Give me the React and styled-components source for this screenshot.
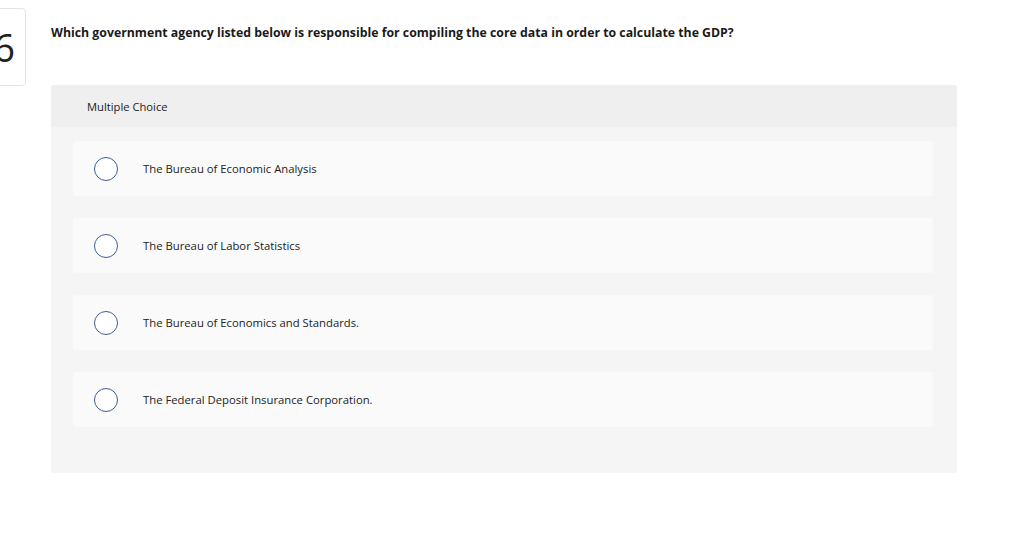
import styled, { createGlobalStyle } from "styled-components";

const GlobalStyle = createGlobalStyle`
  html, body {
    margin: 0;
    padding: 0;
    background: #ffffff;
    overflow: hidden;
  }
  body {
    font-family: "Open Sans", "Lato", Arial, sans-serif;
    color: #1a1a1a;
  }
`;

const Page = styled.div`
  display: flex;
  align-items: flex-start;
  width: 1024px;
  height: 549px;
  padding-top: 8px;
  box-sizing: border-box;
`;

const NumberBox = styled.div`
  flex: none;
  width: 62px;
  height: 78px;
  margin-left: -36px;
  border: 1px solid #e4e4e4;
  border-radius: 4px;
  box-sizing: border-box;
  display: flex;
  align-items: center;
  justify-content: flex-end;
  padding-right: 10px;
  font-family: "Open Sans", "Lato", sans-serif;
  font-size: 38px;
  font-weight: 400;
  color: #222;
`;

const Main = styled.div`
  margin-left: 25px;
  width: 906px;
`;

const Question = styled.h2`
  margin: 16px 0 0;
  font-size: 12.3px;
  font-weight: 700;
  line-height: 18px;
  color: #1a1a1a;
`;

const Panel = styled.div`
  margin-top: 43px;
  background: #f5f5f5;
  border-radius: 3px;
  overflow: hidden;
  padding-bottom: 46px;
`;

const PanelHeader = styled.div`
  height: 42px;
  background: #efefef;
  display: flex;
  align-items: center;
  padding-left: 36px;
  font-size: 11.2px;
  color: #222;
`;

const Options = styled.div`
  display: flex;
  flex-direction: column;
  gap: 22px;
  padding: 14px 24px 0 22px;
`;

const Option = styled.label`
  display: flex;
  align-items: center;
  height: 55px;
  background: #fafafa;
  border-radius: 3px;
  padding-left: 21px;
  font-size: 11.3px;
  color: #222;
  cursor: pointer;
`;

const Radio = styled.span`
  flex: none;
  width: 24px;
  height: 24px;
  border: 1px solid #3d5f8c;
  border-radius: 50%;
  box-sizing: border-box;
  background: #fff;
  margin-right: 25px;
`;

const choices = [
  "The Bureau of Economic Analysis",
  "The Bureau of Labor Statistics",
  "The Bureau of Economics and Standards.",
  "The Federal Deposit Insurance Corporation.",
];

export default function App() {
  return (
    <>
      <GlobalStyle />
      <Page>
        <NumberBox>6</NumberBox>
        <Main>
          <Question>
            Which government agency listed below is responsible for compiling
            the core data in order to calculate the GDP?
          </Question>
          <Panel>
            <PanelHeader>Multiple Choice</PanelHeader>
            <Options>
              {choices.map((c) => (
                <Option key={c}>
                  <Radio />
                  {c}
                </Option>
              ))}
            </Options>
          </Panel>
        </Main>
      </Page>
    </>
  );
}
